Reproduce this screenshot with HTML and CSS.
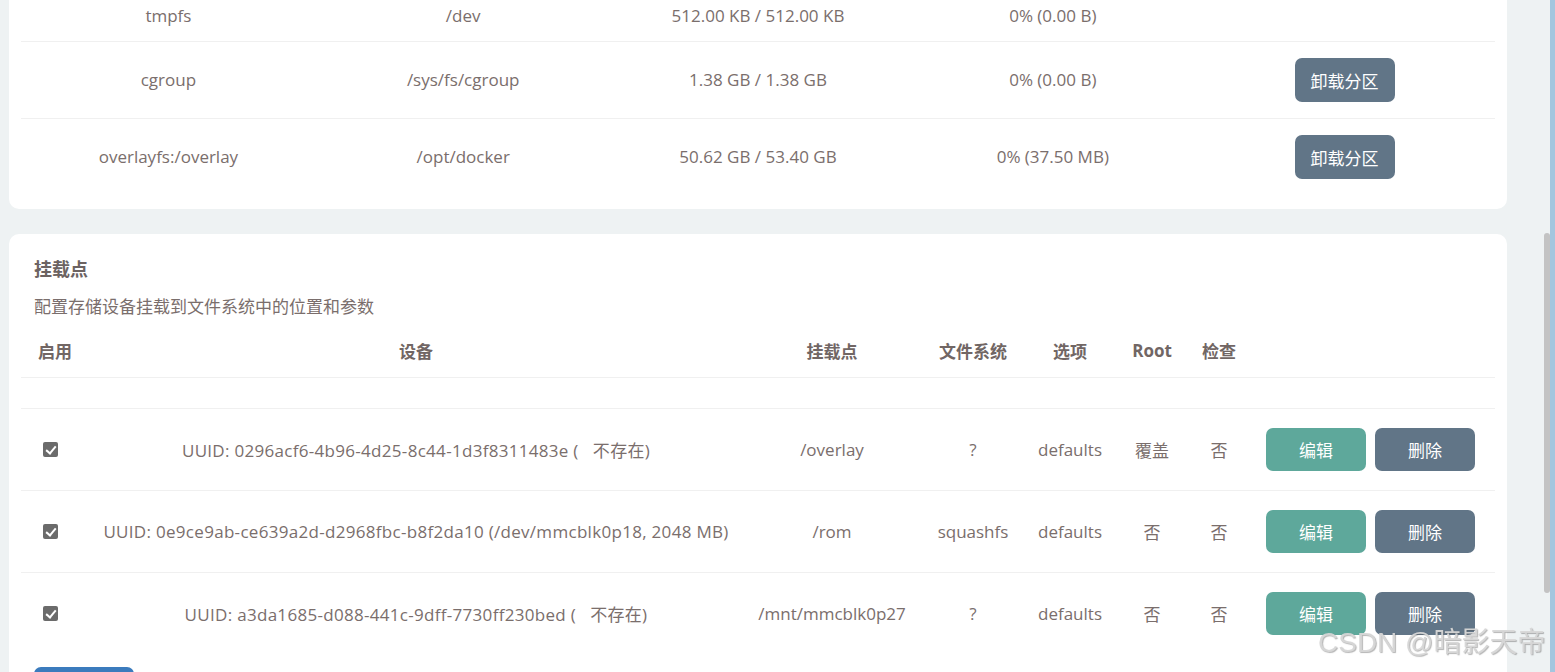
FILE: index.html
```html
<!DOCTYPE html>
<html lang="zh-CN">

<head>
    <meta charset="UTF-8">
    <meta name="viewport" content="width=device-width, initial-scale=1.0">
    <title>挂载点</title>
    <link rel="stylesheet" href="styles.css">
</head>

<body>

    <div class="page">
        <!-- 已挂载的文件系统 -->
        <section class="card card-parts">
            <table class="tbl tbl-parts">
                <tr>
                    <td>tmpfs</td>
                    <td>/dev</td>
                    <td>512.00 KB / 512.00 KB</td>
                    <td>0% (0.00 B)</td>
                    <td></td>
                </tr>
                <tr>
                    <td>cgroup</td>
                    <td>/sys/fs/cgroup</td>
                    <td>1.38 GB / 1.38 GB</td>
                    <td>0% (0.00 B)</td>
                    <td><button class="btn btn-slate">卸载分区</button></td>
                </tr>
                <tr>
                    <td>overlayfs:/overlay</td>
                    <td>/opt/docker</td>
                    <td>50.62 GB / 53.40 GB</td>
                    <td>0% (37.50 MB)</td>
                    <td><button class="btn btn-slate">卸载分区</button></td>
                </tr>
            </table>
        </section>

        <!-- 挂载点 -->
        <section class="card card-mounts">
            <h3 class="card-title">挂载点</h3>
            <p class="card-desc">配置存储设备挂载到文件系统中的位置和参数</p>

            <table class="tbl tbl-mounts">
                <colgroup>
                    <col class="c-on">
                    <col class="c-dev">
                    <col class="c-point">
                    <col class="c-fs">
                    <col class="c-opt">
                    <col class="c-root">
                    <col class="c-chk">
                    <col>
                </colgroup>
                <tr class="head">
                    <th>启用</th>
                    <th>设备</th>
                    <th>挂载点</th>
                    <th>文件系统</th>
                    <th>选项</th>
                    <th>Root</th>
                    <th>检查</th>
                    <th></th>
                </tr>
                <tr class="blank">
                    <td colspan="8"></td>
                </tr>
                <tr>
                    <td class="on"><input type="checkbox" class="check" checked></td>
                    <td class="dev">UUID: 0296acf6-4b96-4d25-8c44-1d3f8311483e (&nbsp;&nbsp; 不存在)</td>
                    <td>/overlay</td>
                    <td>?</td>
                    <td>defaults</td>
                    <td>覆盖</td>
                    <td>否</td>
                    <td class="actions"><button class="btn btn-green">编辑</button><button class="btn btn-slate">删除</button></td>
                </tr>
                <tr>
                    <td class="on"><input type="checkbox" class="check" checked></td>
                    <td class="dev">UUID: 0e9ce9ab-ce639a2d-d2968fbc-b8f2da10 (/dev/mmcblk0p18, 2048 MB)</td>
                    <td>/rom</td>
                    <td>squashfs</td>
                    <td>defaults</td>
                    <td>否</td>
                    <td>否</td>
                    <td class="actions"><button class="btn btn-green">编辑</button><button class="btn btn-slate">删除</button></td>
                </tr>
                <tr>
                    <td class="on"><input type="checkbox" class="check" checked></td>
                    <td class="dev">UUID: a3da1685-d088-441c-9dff-7730ff230bed (&nbsp;&nbsp; 不存在)</td>
                    <td>/mnt/mmcblk0p27</td>
                    <td>?</td>
                    <td>defaults</td>
                    <td>否</td>
                    <td>否</td>
                    <td class="actions"><button class="btn btn-green">编辑</button><button class="btn btn-slate">删除</button></td>
                </tr>
            </table>

            <button class="btn btn-blue">添加</button>
        </section>
    </div>

    <div class="scroll-thumb"></div>
    <div class="window-edge"></div>
    <div class="watermark">CSDN @暗影天帝</div>

</body>

</html>
```

FILE: styles.css
```css
body {
    margin: 0;
    height: 672px;
    overflow: hidden;
    background: #eef2f3;
    font-family: "Open Sans", "Noto Sans CJK SC", sans-serif;
    font-size: 17px;
    color: #7a6e6c;
}

.page {
    padding: 0 48px 0 9px;
}

.card {
    background: #fff;
    border-radius: 10px;
    padding: 12px;
}

.card-parts {
    margin-top: -21px;
    padding-bottom: 14px;
}

.card-mounts {
    margin-top: 25px;
    padding-top: 23px;
}

.card-title {
    margin: 0 0 14px 13px;
    font-size: 18px;
    line-height: 24px;
    font-weight: bold;
    color: #6c6362;
}

.card-desc {
    margin: 0 0 5px 13px;
    line-height: 24px;
}

.tbl {
    width: 100%;
    border-collapse: collapse;
    table-layout: fixed;
}

.tbl td,
.tbl th {
    padding: 0;
    text-align: center;
    vertical-align: middle;
    border-bottom: 1px solid #f0f0f0;
    white-space: nowrap;
}

.tbl tr:last-child td {
    border-bottom: none;
}

.tbl-parts td {
    padding: 13px 0;
    line-height: 24px;
}

.tbl-parts td:last-child {
    padding-right: 6px;
}

.tbl-parts .btn {
    display: block;
    margin: 3px auto;
    height: 44px;
}

.tbl-mounts th {
    height: 53px;
    font-weight: bold;
    color: #716664;
}

.tbl-mounts .blank td {
    height: 30px;
}

.tbl-mounts td {
    height: 81px;
}

.tbl-mounts td.dev {
    letter-spacing: 0.3px;
}

.c-on { width: 68px; }
.c-dev { width: 654px; }
.c-point { width: 178px; }
.c-fs { width: 104px; }
.c-opt { width: 90px; }
.c-root { width: 74px; }
.c-chk { width: 60px; }

.tbl-mounts td.on {
    text-align: left;
    padding-left: 22px;
}

.tbl-mounts td.actions {
    text-align: left;
    padding-left: 17px;
}

.check {
    appearance: none;
    -webkit-appearance: none;
    display: block;
    width: 15px;
    height: 15px;
    margin: 0;
    border-radius: 2px;
    background: #6b6b6b;
    position: relative;
}

.check:checked::after {
    content: "";
    position: absolute;
    left: 5px;
    top: 2px;
    width: 4px;
    height: 8px;
    border: solid #fff;
    border-width: 0 2px 2px 0;
    transform: rotate(40deg);
}

.btn {
    font-family: inherit;
    font-size: 17px;
    color: #fff;
    border: none;
    border-radius: 7px;
    width: 100px;
    height: 43px;
    padding: 0;
    cursor: pointer;
}

.btn + .btn {
    margin-left: 9px;
}

.btn-slate {
    background: #617587;
}

.btn-green {
    background: #5ea89b;
}

.btn-blue {
    background: #3b7bbd;
    margin: 13px 0 0 13px;
}

.scroll-thumb {
    position: fixed;
    left: 1544px;
    top: 233px;
    width: 6px;
    height: 360px;
    border-radius: 3px;
    background: #c3c3c3;
}

.window-edge {
    position: fixed;
    left: 1550px;
    top: 0;
    width: 5px;
    height: 100%;
    background: #a3c6df;
}

.watermark {
    position: fixed;
    left: 1318px;
    top: 624px;
    font-family: "Liberation Sans", "Noto Sans CJK SC", sans-serif;
    font-size: 28px;
    line-height: 38px;
    color: rgba(215, 215, 215, 0.95);
    text-shadow: 1px 1px 1px rgba(90, 90, 90, 0.45);
    white-space: nowrap;
}
```
